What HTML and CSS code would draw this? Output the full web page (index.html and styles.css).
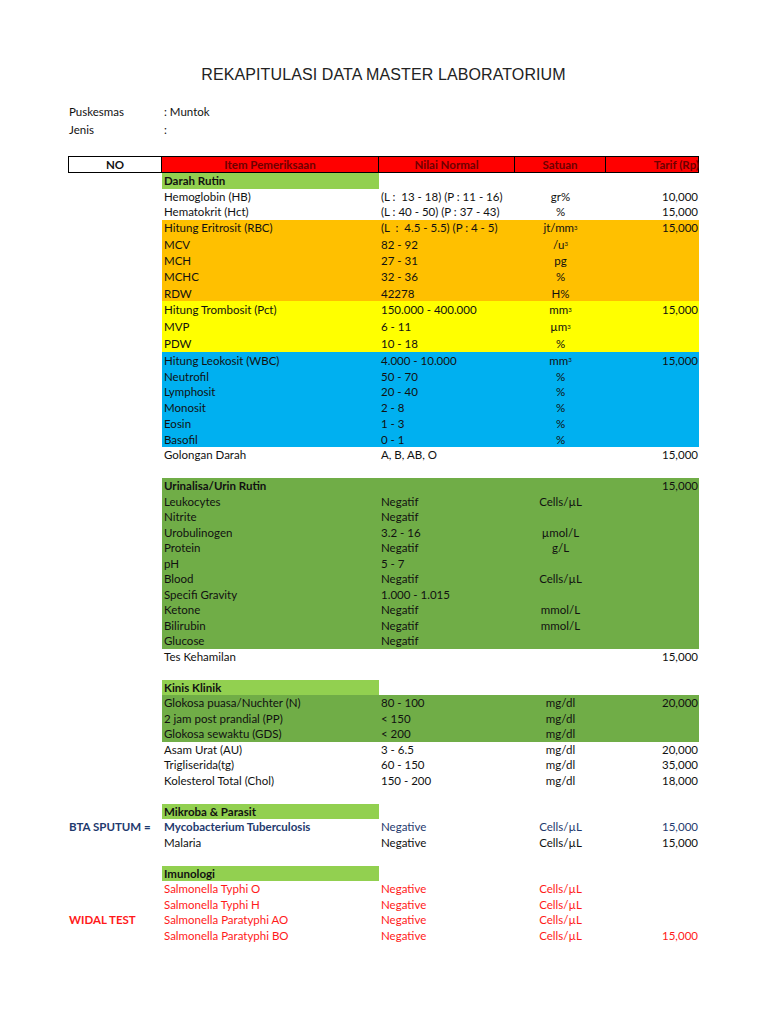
FILE: index.html
```html
<!DOCTYPE html>
<html>
<head>
<meta charset="utf-8">
<link rel="stylesheet" href="styles.css">
</head>
<body>
<div class="page">
  <h1 class="title">REKAPITULASI DATA MASTER LABORATORIUM</h1>
  <div class="info">
    <div class="info-row"><span class="info-label">Puskesmas</span><span>: Muntok</span></div>
    <div class="info-row"><span class="info-label">Jenis</span><span>:</span></div>
  </div>

  <div class="table">
    <div class="row head">
      <span class="c-no">NO</span>
      <div class="cells">
        <span class="c">Item Pemeriksaan</span>
        <span class="c">Nilai Normal</span>
        <span class="c">Satuan</span>
        <span class="c tarif">Tarif (Rp)</span>
      </div>
    </div>

    <div class="row"><span class="c-no"></span><div class="cells"><span class="c hd">Darah Rutin</span><span class="c"></span><span class="c"></span><span class="c"></span></div></div>
    <div class="row"><span class="c-no"></span><div class="cells"><span class="c">Hemoglobin (HB)</span><span class="c">(L : &nbsp;13 - 18) (P : 11 - 16)</span><span class="c sat">gr%</span><span class="c num">10,000</span></div></div>
    <div class="row"><span class="c-no"></span><div class="cells"><span class="c">Hematokrit (Hct)</span><span class="c">(L : 40 - 50) (P : 37 - 43)</span><span class="c sat">%</span><span class="c num">15,000</span></div></div>

    <div class="row orange"><span class="c-no"></span><div class="cells"><span class="c">Hitung Eritrosit (RBC)</span><span class="c">(L &nbsp;: &nbsp;4.5 - 5.5) (P : 4 - 5)</span><span class="c sat">jt/mm<sup>3</sup></span><span class="c num">15,000</span></div></div>
    <div class="row orange"><span class="c-no"></span><div class="cells"><span class="c">MCV</span><span class="c">82 - 92</span><span class="c sat">/u<sup>3</sup></span><span class="c num"></span></div></div>
    <div class="row orange"><span class="c-no"></span><div class="cells"><span class="c">MCH</span><span class="c">27 - 31</span><span class="c sat">pg</span><span class="c num"></span></div></div>
    <div class="row orange"><span class="c-no"></span><div class="cells"><span class="c">MCHC</span><span class="c">32 - 36</span><span class="c sat">%</span><span class="c num"></span></div></div>
    <div class="row orange"><span class="c-no"></span><div class="cells"><span class="c">RDW</span><span class="c">42278</span><span class="c sat">H%</span><span class="c num"></span></div></div>

    <div class="row yellow"><span class="c-no"></span><div class="cells"><span class="c">Hitung Trombosit (Pct)</span><span class="c">150.000 - 400.000</span><span class="c sat">mm<sup>3</sup></span><span class="c num">15,000</span></div></div>
    <div class="row yellow"><span class="c-no"></span><div class="cells"><span class="c">MVP</span><span class="c">6 - 11</span><span class="c sat">µm<sup>3</sup></span><span class="c num"></span></div></div>
    <div class="row yellow"><span class="c-no"></span><div class="cells"><span class="c">PDW</span><span class="c">10 - 18</span><span class="c sat">%</span><span class="c num"></span></div></div>

    <div class="row blue"><span class="c-no"></span><div class="cells"><span class="c">Hitung Leokosit (WBC)</span><span class="c">4.000 - 10.000</span><span class="c sat">mm<sup>3</sup></span><span class="c num">15,000</span></div></div>
    <div class="row blue"><span class="c-no"></span><div class="cells"><span class="c">Neutrofil</span><span class="c">50 - 70</span><span class="c sat">%</span><span class="c num"></span></div></div>
    <div class="row blue"><span class="c-no"></span><div class="cells"><span class="c">Lymphosit</span><span class="c">20 - 40</span><span class="c sat">%</span><span class="c num"></span></div></div>
    <div class="row blue"><span class="c-no"></span><div class="cells"><span class="c">Monosit</span><span class="c">2 - 8</span><span class="c sat">%</span><span class="c num"></span></div></div>
    <div class="row blue"><span class="c-no"></span><div class="cells"><span class="c">Eosin</span><span class="c">1 - 3</span><span class="c sat">%</span><span class="c num"></span></div></div>
    <div class="row blue"><span class="c-no"></span><div class="cells"><span class="c">Basofil</span><span class="c">0 - 1</span><span class="c sat">%</span><span class="c num"></span></div></div>

    <div class="row"><span class="c-no"></span><div class="cells"><span class="c">Golongan Darah</span><span class="c">A, B, AB, O</span><span class="c sat"></span><span class="c num">15,000</span></div></div>
    <div class="row blank"></div>

    <div class="row green"><span class="c-no"></span><div class="cells"><span class="c b">Urinalisa/Urin Rutin</span><span class="c"></span><span class="c sat"></span><span class="c num">15,000</span></div></div>
    <div class="row green"><span class="c-no"></span><div class="cells"><span class="c">Leukocytes</span><span class="c">Negatif</span><span class="c sat">Cells/µL</span><span class="c num"></span></div></div>
    <div class="row green"><span class="c-no"></span><div class="cells"><span class="c">Nitrite</span><span class="c">Negatif</span><span class="c sat"></span><span class="c num"></span></div></div>
    <div class="row green"><span class="c-no"></span><div class="cells"><span class="c">Urobulinogen</span><span class="c">3.2 - 16</span><span class="c sat">µmol/L</span><span class="c num"></span></div></div>
    <div class="row green"><span class="c-no"></span><div class="cells"><span class="c">Protein</span><span class="c">Negatif</span><span class="c sat">g/L</span><span class="c num"></span></div></div>
    <div class="row green"><span class="c-no"></span><div class="cells"><span class="c">pH</span><span class="c">5 - 7</span><span class="c sat"></span><span class="c num"></span></div></div>
    <div class="row green"><span class="c-no"></span><div class="cells"><span class="c">Blood</span><span class="c">Negatif</span><span class="c sat">Cells/µL</span><span class="c num"></span></div></div>
    <div class="row green"><span class="c-no"></span><div class="cells"><span class="c">Specifi Gravity</span><span class="c">1.000 - 1.015</span><span class="c sat"></span><span class="c num"></span></div></div>
    <div class="row green"><span class="c-no"></span><div class="cells"><span class="c">Ketone</span><span class="c">Negatif</span><span class="c sat">mmol/L</span><span class="c num"></span></div></div>
    <div class="row green"><span class="c-no"></span><div class="cells"><span class="c">Bilirubin</span><span class="c">Negatif</span><span class="c sat">mmol/L</span><span class="c num"></span></div></div>
    <div class="row green"><span class="c-no"></span><div class="cells"><span class="c">Glucose</span><span class="c">Negatif</span><span class="c sat"></span><span class="c num"></span></div></div>
    <div class="row"><span class="c-no"></span><div class="cells"><span class="c">Tes Kehamilan</span><span class="c"></span><span class="c sat"></span><span class="c num">15,000</span></div></div>
    <div class="row blank"></div>

    <div class="row"><span class="c-no"></span><div class="cells"><span class="c hd">Kinis Klinik</span><span class="c"></span><span class="c"></span><span class="c"></span></div></div>
    <div class="row green"><span class="c-no"></span><div class="cells"><span class="c">Glokosa puasa/Nuchter (N)</span><span class="c">80 - 100</span><span class="c sat">mg/dl</span><span class="c num">20,000</span></div></div>
    <div class="row green"><span class="c-no"></span><div class="cells"><span class="c">2 jam post prandial (PP)</span><span class="c">&lt; 150</span><span class="c sat">mg/dl</span><span class="c num"></span></div></div>
    <div class="row green"><span class="c-no"></span><div class="cells"><span class="c">Glokosa sewaktu (GDS)</span><span class="c">&lt; 200</span><span class="c sat">mg/dl</span><span class="c num"></span></div></div>
    <div class="row"><span class="c-no"></span><div class="cells"><span class="c">Asam Urat (AU)</span><span class="c">3 - 6.5</span><span class="c sat">mg/dl</span><span class="c num">20,000</span></div></div>
    <div class="row"><span class="c-no"></span><div class="cells"><span class="c">Trigliserida(tg)</span><span class="c">60 - 150</span><span class="c sat">mg/dl</span><span class="c num">35,000</span></div></div>
    <div class="row"><span class="c-no"></span><div class="cells"><span class="c">Kolesterol Total (Chol)</span><span class="c">150 - 200</span><span class="c sat">mg/dl</span><span class="c num">18,000</span></div></div>
    <div class="row blank"></div>

    <div class="row"><span class="c-no"></span><div class="cells"><span class="c hd">Mikroba &amp; Parasit</span><span class="c"></span><span class="c"></span><span class="c"></span></div></div>
    <div class="row navy"><span class="c-no side">BTA SPUTUM =</span><div class="cells"><span class="c b">Mycobacterium Tuberculosis</span><span class="c">Negative</span><span class="c sat">Cells/µL</span><span class="c num">15,000</span></div></div>
    <div class="row"><span class="c-no"></span><div class="cells"><span class="c">Malaria</span><span class="c">Negative</span><span class="c sat">Cells/µL</span><span class="c num">15,000</span></div></div>
    <div class="row blank"></div>

    <div class="row"><span class="c-no"></span><div class="cells"><span class="c hd">Imunologi</span><span class="c"></span><span class="c"></span><span class="c"></span></div></div>
    <div class="row red"><span class="c-no"></span><div class="cells"><span class="c">Salmonella Typhi O</span><span class="c">Negative</span><span class="c sat">Cells/µL</span><span class="c num"></span></div></div>
    <div class="row red"><span class="c-no"></span><div class="cells"><span class="c">Salmonella Typhi H</span><span class="c">Negative</span><span class="c sat">Cells/µL</span><span class="c num"></span></div></div>
    <div class="row red"><span class="c-no side">WIDAL TEST</span><div class="cells"><span class="c">Salmonella Paratyphi AO</span><span class="c">Negative</span><span class="c sat">Cells/µL</span><span class="c num"></span></div></div>
    <div class="row red"><span class="c-no"></span><div class="cells"><span class="c">Salmonella Paratyphi BO</span><span class="c">Negative</span><span class="c sat">Cells/µL</span><span class="c num">15,000</span></div></div>
  </div>
</div>
</body>
</html>
```
FILE: styles.css
```css
* { box-sizing: border-box; }
html, body { margin: 0; padding: 0; background: #fff; }
body {
  font-family: Lato, "Open Sans", sans-serif;
  font-size: 11.5px;
  color: #111;
}
.page {
  width: 768px;
  padding: 65px 0 0 68px;
}
.title {
  margin: 0;
  width: 631px;
  text-align: center;
  font-family: "Liberation Sans", Arial, sans-serif;
  font-weight: normal;
  font-size: 16px;
  line-height: 20px;
  color: #222;
  letter-spacing: 0.1px;
}
.info {
  margin-top: 17px;
  padding-left: 1px;
}
.info-row {
  display: flex;
  height: 18px;
  align-items: center;
}
.info-label { width: 95px; }

.table {
  margin-top: 18px;
  width: 631px;
}
.row {
  display: flex;
  height: 15.5px;
  align-items: stretch;
}
.row.blank { height: 15.5px; }
.c-no {
  width: 94px;
  flex: none;
  display: flex;
  align-items: center;
  padding-left: 1px;
}
.cells {
  display: grid;
  grid-template-columns: 217px 136px 91px 93px;
  flex: none;
  width: 537px;
}
.c {
  display: flex;
  align-items: center;
  padding-left: 2px;
  white-space: nowrap;
  overflow: hidden;
}
.c.sat { justify-content: center; padding-left: 0; }
.c.num { justify-content: flex-end; padding-left: 0; padding-right: 1px; }
.c.hd { background: #92d050; font-weight: bold; }
.b { font-weight: bold; }
sup { font-size: 6px; vertical-align: top; line-height: 1; margin-top: 0; }

.row.head { height: 17px; }
.head .c-no {
  border: 1px solid #000;
  justify-content: center;
  font-weight: bold;
  padding-left: 0;
}
.head .cells { background: #ff0000; border-top: 1px solid #000; border-bottom: 1px solid #000; border-right: 1px solid #000; }
.head .c {
  justify-content: center;
  color: #6e0000;
  font-weight: bold;
  border-right: 1px solid #000;
  padding-left: 0;
}
.head .c:last-child { border-right: none; }
.head .c.tarif { justify-content: flex-end; padding-right: 0; }

.orange { height: 16.4px; }
.orange .cells { background: #ffc000; }
.yellow { height: 17px; }
.yellow .cells { background: #ffff00; }
.blue { height: 15.8px; }
.blue .cells { background: #00b0f0; }
.green .cells { background: #70ad47; }

.navy .cells, .navy .side { color: #1f3a6e; }
.navy .side { font-weight: bold; }
.red .cells, .red .side { color: #ff1a1a; }
.red .side { font-weight: bold; }
```
